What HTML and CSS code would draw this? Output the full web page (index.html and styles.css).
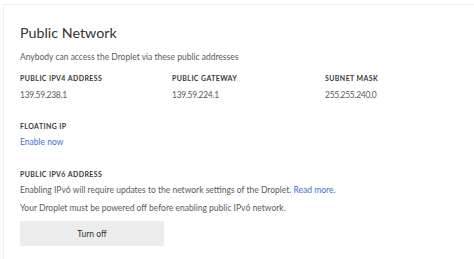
FILE: index.html
```html
<!DOCTYPE html>
<html lang="en">
<head>
    <meta charset="UTF-8">
    <meta name="viewport" content="width=device-width, initial-scale=1.0">
    <title>Public Network</title>
    <link rel="stylesheet" href="styles.css">
</head>
<body>
    <div class="card">
        <h1>Public Network</h1>
        <p class="intro">Anybody can access the Droplet via these public addresses</p>

        <div class="grid">
            <div class="field">
                <div class="label">Public IPv4 Address</div>
                <div class="value ip">139.59.238.1</div>
            </div>
            <div class="field">
                <div class="label">Public Gateway</div>
                <div class="value ip">139.59.224.1</div>
            </div>
            <div class="field">
                <div class="label">Subnet Mask</div>
                <div class="value ip">255.255.240.0</div>
            </div>
        </div>

        <div class="section">
            <div class="label">Floating IP</div>
            <a href="#" class="link value">Enable now</a>
        </div>

        <div class="section ipv6">
            <div class="label">Public IPv6 Address</div>
            <p class="note">Enabling IPv6 will require updates to the network settings of the Droplet. <a href="#" class="link">Read more.</a></p>
            <p class="note">Your Droplet must be powered off before enabling public IPv6 network.</p>
            <button type="button">Turn off</button>
        </div>
    </div>
</body>
</html>
```

FILE: styles.css
```css
body {
    font-family: Lato, "Open Sans", Arial, sans-serif;
    margin: 0;
    padding: 4px 0 0 3px;
    background-color: #fff;
    color: #5b5b5b;
}

.card {
    border: 1px solid #efefef;
    border-right: none;
    padding: 19px 16px 30px 16px;
}

h1 {
    margin: 0;
    font-size: 14.3px;
    font-weight: 400;
    color: #333;
    line-height: 18px;
}

.intro {
    margin: 8px 0 0;
    font-size: 8.5px;
    line-height: 14px;
}

.grid {
    display: grid;
    grid-template-columns: 152px 153px 1fr;
    margin-top: 9px;
}

.label {
    font-size: 7px;
    font-weight: 700;
    letter-spacing: 0.4px;
    text-transform: uppercase;
    color: #3a3a3a;
    line-height: 10px;
}

.value {
    display: block;
    margin-top: 6px;
    font-size: 8.5px;
    line-height: 12px;
}

.ip {
    letter-spacing: -0.3px;
}

.section {
    margin-top: 20px;
}

.section .value {
    margin-top: 5px;
}

.link {
    color: #3d6fd6;
    text-decoration: none;
}

.ipv6 {
    margin-top: 21px;
}

.note {
    margin: 5px 0 0;
    font-size: 8.5px;
    line-height: 12px;
}

.note + .note {
    margin-top: 6px;
}

button {
    display: block;
    margin-top: 7px;
    width: 144px;
    height: 25px;
    background-color: #ececec;
    border: none;
    border-radius: 1px;
    font-family: inherit;
    font-size: 8.5px;
    color: #333;
}
```
